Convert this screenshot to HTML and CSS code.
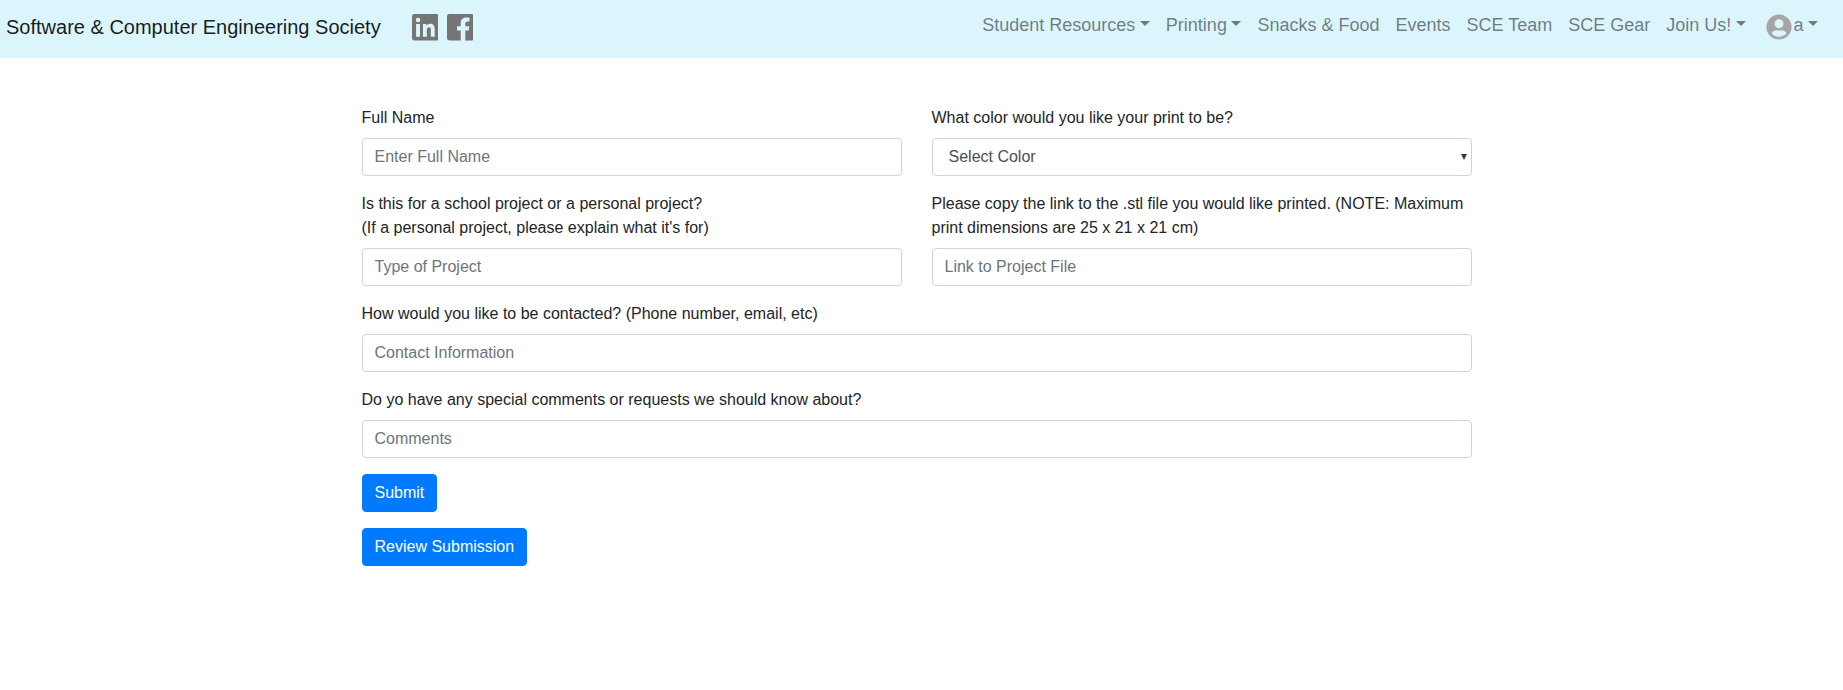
FILE: index.html
```html
<!DOCTYPE html>
<html lang="en">

<head>
    <meta charset="UTF-8">
    <title>Printing Form</title>
    <link rel="stylesheet" href="styles.css">
</head>

<body>
    <nav class="navbar">
        <a class="brand" href="#">Software &amp; Computer Engineering Society</a>
        <div class="social">
            <svg class="social-icon" viewBox="0 0 448 448">
                <path fill="currentColor" fill-rule="evenodd" d="M36 0H412A36 36 0 0 1 448 36V412A36 36 0 0 1 412 448H36A36 36 0 0 1 0 412V36A36 36 0 0 1 36 0zM69 170V384H135V170zM102 64A38 38 0 1 0 102 140A38 38 0 0 0 102 64zM185 170V384H251V278C251 250 257 223 291 223C325 223 318 255 318 280V384H384V267C384 209 372 165 305 165C273 165 251 183 242 200H241V170z" />
            </svg>
            <svg class="social-icon" viewBox="0 0 448 448">
                <path fill="currentColor" d="M36 0H412A36 36 0 0 1 448 36V412A36 36 0 0 1 412 448H310V280H366L377 208H310V166C310 146 320 128 350 128H380V66S352 60 325 60C268 60 232 95 232 157V208H170V280H232V448H36A36 36 0 0 1 0 412V36A36 36 0 0 1 36 0z" />
            </svg>
        </div>
        <ul class="nav-links">
            <li><a class="nav-link caret" href="#">Student Resources</a></li>
            <li><a class="nav-link caret" href="#">Printing</a></li>
            <li><a class="nav-link" href="#">Snacks &amp; Food</a></li>
            <li><a class="nav-link" href="#">Events</a></li>
            <li><a class="nav-link" href="#">SCE Team</a></li>
            <li><a class="nav-link" href="#">SCE Gear</a></li>
            <li><a class="nav-link caret" href="#">Join Us!</a></li>
            <li>
                <a class="nav-link caret" href="#">
                    <svg class="avatar" viewBox="0 0 496 512">
                        <path fill="currentColor" d="M248 8C111 8 0 119 0 256s111 248 248 248 248-111 248-248S385 8 248 8zm0 96c48.600 0 88 39.400 88 88s-39.400 88-88 88-88-39.400-88-88 39.400-88 88-88zm0 344c-58.700 0-111.300-26.600-146.500-68.200 18.800-35.400 55.600-59.800 98.500-59.800 2.400 0 4.800.4 7.100 1.100 13 4.200 26.600 6.900 40.900 6.900 14.300 0 28-2.700 40.900-6.900 2.300-.7 4.700-1.100 7.100-1.100 42.900 0 79.700 24.400 98.500 59.800C359.300 421.400 306.700 448 248 448z" />
                    </svg>a</a>
            </li>
        </ul>
    </nav>

    <main class="page">
        <form class="print-form">
            <div class="form-row">
                <div class="form-group">
                    <label for="name">Full Name</label>
                    <input id="name" type="text" placeholder="Enter Full Name">
                </div>
                <div class="form-group">
                    <label for="color">What color would you like your print to be?</label>
                    <div class="select-wrap">
                        <select id="color">
                            <option>Select Color</option>
                        </select>
                    </div>
                </div>
            </div>
            <div class="form-row">
                <div class="form-group">
                    <label for="type">Is this for a school project or a personal project?<br>(If a personal project, please explain what it's for)</label>
                    <input id="type" type="text" placeholder="Type of Project">
                </div>
                <div class="form-group">
                    <label for="link">Please copy the link to the .stl file you would like printed. (NOTE: Maximum print dimensions are 25 x 21 x 21 cm)</label>
                    <input id="link" type="text" placeholder="Link to Project File">
                </div>
            </div>
            <div class="form-group">
                <label for="contact">How would you like to be contacted? (Phone number, email, etc)</label>
                <input id="contact" type="text" placeholder="Contact Information">
            </div>
            <div class="form-group">
                <label for="comments">Do yo have any special comments or requests we should know about?</label>
                <input id="comments" type="text" placeholder="Comments">
            </div>
            <div class="buttons">
                <button type="button">Submit</button>
                <button type="button">Review Submission</button>
            </div>
        </form>
    </main>
</body>

</html>
```

FILE: styles.css
```css
* {
    box-sizing: border-box;
}

body {
    margin: 0;
    font-family: "Liberation Sans", Arial, sans-serif;
    font-size: 16px;
    line-height: 24px;
    color: #212529;
    background: #fff;
}

a {
    text-decoration: none;
}

.navbar {
    display: flex;
    align-items: center;
    height: 58px;
    padding: 0 17px 0 6px;
    background: #dbf5fd;
}

.brand {
    margin-bottom: 4px;
    font-size: 20px;
    line-height: 30px;
    color: rgba(0, 0, 0, 0.9);
}

.social {
    display: flex;
    gap: 8.5px;
    margin: 0 0 3.5px 31px;
    color: #757575;
}

.social-icon {
    display: block;
    width: 26.5px;
    height: 26.5px;
}

.nav-links {
    display: flex;
    align-self: flex-start;
    margin: 13px 0 0 auto;
    padding: 0;
    list-style: none;
    font-size: 18px;
}

.nav-link {
    display: block;
    padding: 0 8px;
    color: rgba(0, 0, 0, 0.5);
}

.caret::after {
    content: "";
    display: inline-block;
    margin-left: 0.255em;
    vertical-align: 0.255em;
    border-top: 0.3em solid;
    border-left: 0.3em solid transparent;
    border-right: 0.3em solid transparent;
}

.avatar {
    width: 26px;
    height: 26px;
    margin: 0 1px 0 4.5px;
    vertical-align: -8.500px;
    color: #a6a6a6;
}

.page {
    width: 1110px;
    margin-left: 361.5px;
    padding-top: 48px;
}

.form-row {
    display: grid;
    grid-template-columns: 1fr 1fr;
    column-gap: 30px;
}

.form-group {
    margin-bottom: 16px;
}

label {
    display: block;
    margin-bottom: 8px;
}

input,
select {
    display: block;
    width: 100%;
    height: 38px;
    padding: 6px 12px;
    font: inherit;
    color: #495057;
    background: #fff;
    border: 1px solid #ced4da;
    border-radius: 4px;
}

input::placeholder {
    color: #6c757d;
}

select {
    padding-left: 16px;
    appearance: none;
}

.select-wrap {
    position: relative;
}

.select-wrap::after {
    content: "";
    position: absolute;
    top: 16px;
    right: 5px;
    border-top: 6px solid #343a40;
    border-left: 3px solid transparent;
    border-right: 3px solid transparent;
}

.buttons {
    display: flex;
    flex-direction: column;
    align-items: flex-start;
    gap: 16px;
}

button {
    height: 38px;
    padding: 6px 12px;
    font: inherit;
    color: #fff;
    background: #007bff;
    border: 1px solid #007bff;
    border-radius: 4px;
}
```
